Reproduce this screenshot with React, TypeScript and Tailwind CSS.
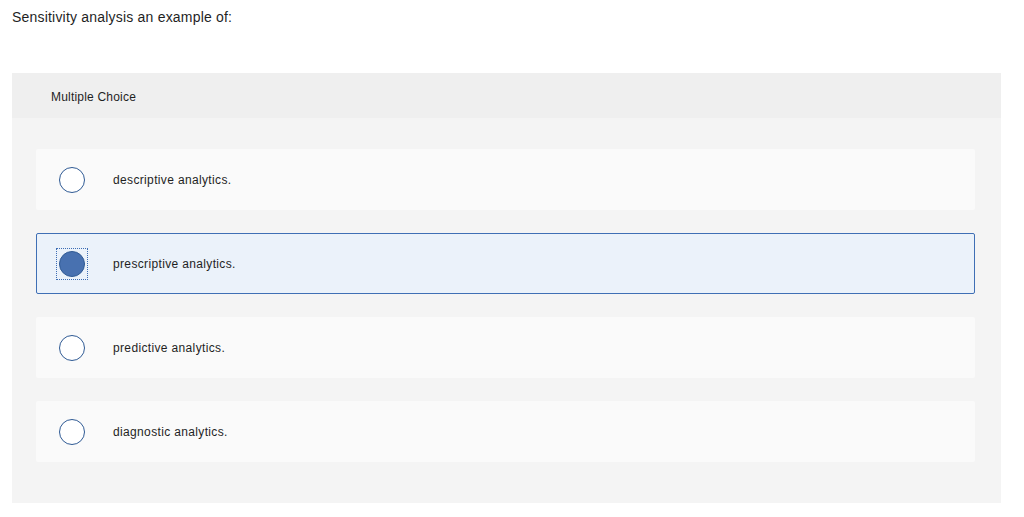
const OPTIONS = [
  "descriptive analytics.",
  "prescriptive analytics.",
  "predictive analytics.",
  "diagnostic analytics.",
];

export default function App() {
  const selected = 1;

  return (
    <div className="min-h-[517px] bg-white px-3 pt-[9px] text-[#1f1f1f] [font-family:'Liberation_Sans',Arial,sans-serif]">
      <p className="text-[14px] leading-[17px] tracking-[0.2px]">Sensitivity analysis an example of:</p>

      <div className="mt-[47px] w-[989px] bg-[#f4f4f4]">
        <div className="flex h-[45px] items-center bg-[#efefef] pt-[3px] pl-[39px] text-[12px] tracking-[0.2px]">
          Multiple Choice
        </div>

        <div className="flex flex-col gap-[23px] pt-[31px] pr-[26px] pb-[41px] pl-6">
          {OPTIONS.map((label, i) => {
            const on = i === selected;
            return (
              <div
                key={label}
                className={`flex h-[61px] items-center rounded-[2px] ${
                  on ? "border border-[#3f6fb5] bg-[#ebf2fa]" : "bg-[#fafafa]"
                }`}
              >
                <div className={`flex w-[72px] justify-center ${on ? "-ml-px" : ""}`}>
                  <div
                    className={`flex h-[32px] w-[32px] items-center justify-center ${
                      on ? "border border-dotted border-[#3d6db4]" : ""
                    }`}
                  >
                    <div
                      className={`h-[26px] w-[26px] rounded-full border border-[#2f5a94] ${
                        on ? "bg-[#4871b0]" : "bg-white"
                      }`}
                    />
                  </div>
                </div>
                <span className="ml-[5px] text-[12px] tracking-[0.35px]">{label}</span>
              </div>
            );
          })}
        </div>
      </div>
    </div>
  );
}
